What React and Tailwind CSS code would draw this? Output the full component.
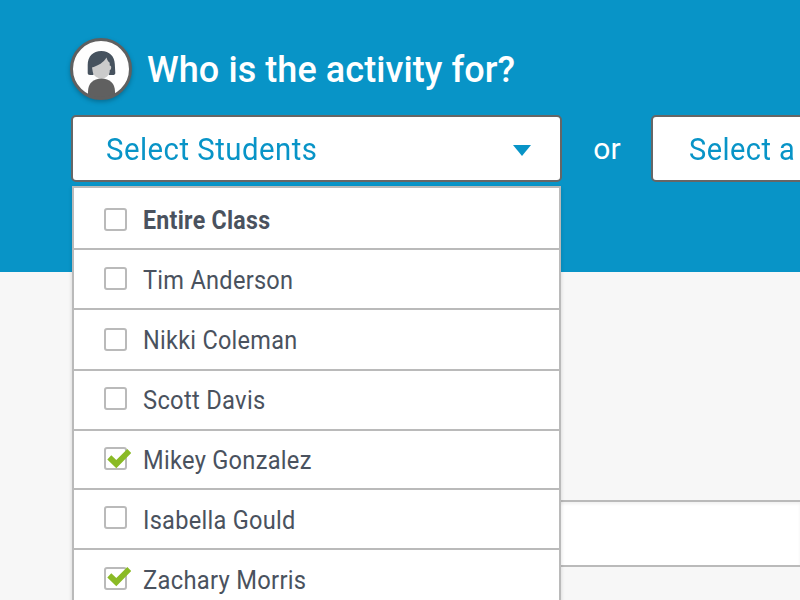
import { useState } from 'react';

const STUDENTS = [
    { name: 'Entire Class', row: 'h-[62px]', box: 'mt-[20px]', check: 'top-0', label: 'mt-[18px] font-bold scale-x-[0.927]' },
    { name: 'Tim Anderson', row: 'h-[60px]', box: 'mt-[17px]', check: 'top-0', label: 'mt-[16px] scale-x-[0.942]' },
    { name: 'Nikki Coleman', row: 'h-[61px]', box: 'mt-[18px]', check: 'top-0', label: 'mt-[16px] scale-x-[0.938]' },
    { name: 'Scott Davis', row: 'h-[60px]', box: 'mt-[16px]', check: 'top-0', label: 'mt-[15px] scale-x-[0.95]' },
    { name: 'Mikey Gonzalez', row: 'h-[59px]', box: 'mt-[16px]', check: 'top-0', label: 'mt-[15px] scale-x-[0.945]' },
    { name: 'Isabella Gould', row: 'h-[60px]', box: 'mt-[16px]', check: 'top-0', label: 'mt-[16px] scale-x-[0.942]' },
    { name: 'Zachary Morris', row: 'h-[60px]', box: 'mt-[17px]', check: 'top-[-2px]', label: 'mt-[16px] scale-x-[0.95]' },
];

function Avatar() {
    return (
        <svg className="w-[62px] h-[62px] shrink-0 overflow-visible drop-shadow-[0_2px_2px_rgba(0,0,0,0.25)]" viewBox="0 0 62 62">
            <defs>
                <clipPath id="avatar-clip">
                    <circle cx="31" cy="31" r="29" />
                </clipPath>
            </defs>
            <circle cx="31" cy="31" r="29.5" fill="#fefefe" />
            <g clipPath="url(#avatar-clip)">
                <path d="M17.7 35V27C17.7 18.5 23 13 31.3 13S44.5 18.5 44.8 26L45.3 35c0 1.400-1 2-2.500 2H39L36 30H26L23.3 37H20C18.4 37 17.7 36.3 17.7 35z" fill="#46525e" />
                <path d="M22 29.5C28.5 27.5 33.5 24.5 36.5 19.5c.6 2.300 1.500 3.900 3.200 5.200v2.800c1.300 0 1.500 1 1.500 2s-.4 2.500-1.500 2.700V34c-1 4-4.200 6.500-8.200 6.500s-8-2.500-8.700-6.500z" fill="#cbcbcb" />
                <path d="M18 62V53.5C18 45.5 23.5 40.5 31.5 40.5S45 45.5 45 53.5V62z" fill="#606060" />
            </g>
            <circle cx="31" cy="31" r="29.5" fill="none" stroke="#606060" strokeWidth="3" />
        </svg>
    );
}

function Checkbox({ checked, student }) {
    return (
        <span className={`relative w-[23px] h-[23px] shrink-0 rounded-[3px] border-2 border-[#bababa] bg-white ${student.box}`}>
            {checked && (
                <svg className={`absolute left-[1px] w-[24px] h-[20px] ${student.check}`} viewBox="0 0 24 20">
                    <path d="M0.3 10.500L4.300 6.300L9.300 10.900L20.300 0L24.200 4L9.300 19.200z" fill="#8aba25" />
                </svg>
            )}
        </span>
    );
}

function StudentRow({ student, checked, onToggle }) {
    return (
        <li>
            <button
                type="button"
                role="checkbox"
                aria-checked={checked}
                onClick={onToggle}
                className={`flex w-full items-start border-b-2 border-[#bababa] pl-[30px] text-left ${student.row}`}
            >
                <Checkbox checked={checked} student={student} />
                <span className={`ml-[16px] origin-left translate-y-[-0.5px] text-[25px] leading-[30px] tracking-[0.3px] text-[#4a525e] ${student.label}`}>
                    {student.name}
                </span>
            </button>
        </li>
    );
}

export default function App() {
    const [selected, setSelected] = useState(['Mikey Gonzalez', 'Zachary Morris']);

    const toggle = (name) => {
        setSelected((list) => (list.includes(name) ? list.filter((n) => n !== name) : [...list, name]));
    };

    return (
        <div className="h-[600px] w-[800px] overflow-hidden bg-[#f7f7f7] font-['Roboto',sans-serif]">
            <header className="h-[272px] bg-[#0894c7] pl-[70px] pt-[38px]">
                <div className="flex h-[62px] items-center">
                    <Avatar />
                    <h1 className="ml-[15px] mt-[2px] whitespace-nowrap text-[36px] font-medium leading-[62px] tracking-[0.08px] text-white">
                        Who is the activity for?
                    </h1>
                </div>

                <div className="ml-[1px] mt-[15px] flex h-[67px] w-[900px] items-center">
                    <div className="relative">
                        <button
                            type="button"
                            className="flex h-[67px] w-[491px] items-center justify-between rounded-[5px] border-2 border-[#666] bg-white pl-[33px] pr-[29px] text-[31px] text-[#0894c7]"
                        >
                            <span className="mt-[3px] origin-left scale-x-[0.947] tracking-[0.5px]">Select Students</span>
                            <svg className="mt-[3px] h-[11px] w-[18px]" viewBox="0 0 18 11">
                                <path d="M0 0h18L9 11z" fill="#0894c7" />
                            </svg>
                        </button>

                        {/* Student menu */}
                        <ul className="absolute left-[1px] top-[71px] w-[489px] border-2 border-[#bababa] bg-white shadow-[0_2px_4px_rgba(0,0,0,0.15)]">
                            {STUDENTS.map((student) => (
                                <StudentRow
                                    key={student.name}
                                    student={student}
                                    checked={selected.includes(student.name)}
                                    onToggle={() => toggle(student.name)}
                                />
                            ))}
                        </ul>
                    </div>
                    <span className="w-[89px] pl-[1px] text-center text-[30px] text-white">or</span>
                    <button
                        type="button"
                        className="flex h-[67px] w-[320px] items-center rounded-[5px] border-2 border-[#666] bg-white pl-[36px] text-[31px] text-[#0894c7]"
                    >
                        <span className="mt-[3px] origin-left scale-x-[0.935] tracking-[0.5px]">Select a</span>
                    </button>
                </div>
            </header>

            <main className="pt-[228px]">
                <div className="h-[67px] border-y-2 border-[#bababa] bg-white ml-[100px] shadow-[inset_0_2px_3px_rgba(0,0,0,0.06)]" />
            </main>
        </div>
    );
}
